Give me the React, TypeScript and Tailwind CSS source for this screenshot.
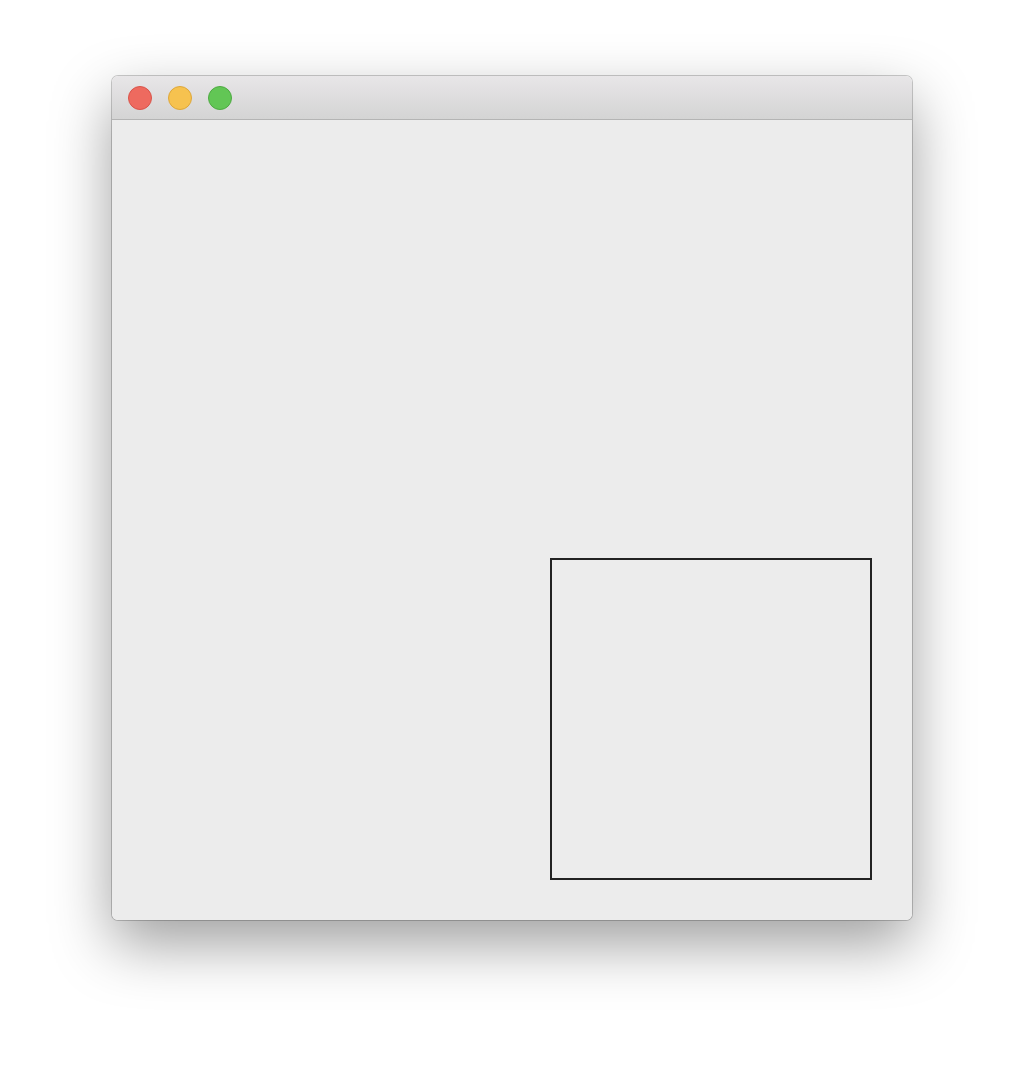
export default function App() {
  return (
    <div className="min-h-[1068px] w-full bg-white flex justify-center items-start pt-[76px]">
      <div className="w-[800px] flex flex-col rounded-[6px] overflow-hidden shadow-[0_0_0_1px_rgba(0,0,0,0.2),0_24px_60px_rgba(0,0,0,0.38)]">
        <div className="h-[44px] flex items-center gap-[16px] pl-[16px] bg-gradient-to-b from-[#e8e6e8] to-[#d4d4d4] border-b border-[#b4b4b4]">
          <span className="w-[24px] h-[24px] rounded-full bg-[#ee6a5f] border border-[#d9544a]" />
          <span className="w-[24px] h-[24px] rounded-full bg-[#f6c24f] border border-[#dea73a]" />
          <span className="w-[24px] h-[24px] rounded-full bg-[#62c655] border border-[#4eaa42]" />
        </div>
        <div className="h-[800px] bg-[#ececec] flex justify-end items-end p-[40px]">
          <div className="w-[322px] h-[322px] border-2 border-[#222222]" />
        </div>
      </div>
    </div>
  );
}
